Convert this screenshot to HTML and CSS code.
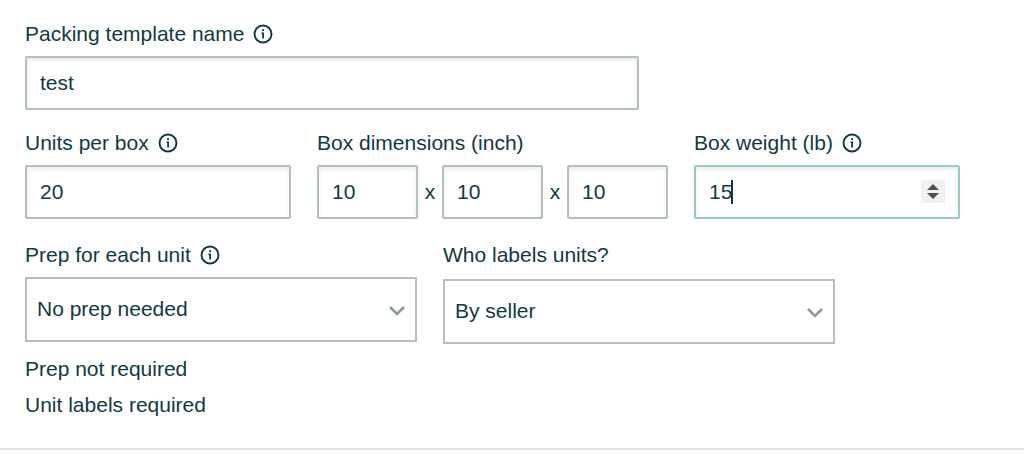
FILE: index.html
```
<!DOCTYPE html>
<html lang="en">
<head>
    <meta charset="UTF-8">
    <meta name="viewport" content="width=device-width, initial-scale=1.0">
    <title>Packing template</title>
    <link rel="stylesheet" href="styles.css">
</head>
<body>
    <svg class="sprite" aria-hidden="true">
        <symbol id="icon-info" viewBox="0 0 20 20">
            <circle cx="10" cy="10" r="8.5" fill="none" stroke="currentColor" stroke-width="1.9"/>
            <rect x="9.1" y="5.2" width="1.9" height="1.9" fill="currentColor"/>
            <path d="M8.3 8.5H11v6H9.2V9.7h-.9z" fill="currentColor"/>
        </symbol>
        <symbol id="icon-chevron" viewBox="0 0 18 12">
            <path d="M2 2l7 7 7-7" fill="none" stroke="currentColor" stroke-width="2.6"/>
        </symbol>
    </svg>

    <form class="packing-form">
        <div class="form-group name-group">
            <div class="label-row">
                <label for="templateName">Packing template name</label>
                <svg class="info-icon"><use href="#icon-info"/></svg>
            </div>
            <input type="text" id="templateName" value="test">
        </div>

        <div class="box-row">
            <div class="form-group">
                <div class="label-row">
                    <label for="unitsPerBox">Units per box</label>
                    <svg class="info-icon"><use href="#icon-info"/></svg>
                </div>
                <input type="number" id="unitsPerBox" value="20">
            </div>

            <div class="form-group">
                <div class="label-row">
                    <label for="boxLength">Box dimensions (inch)</label>
                </div>
                <div class="dimensions">
                    <input type="number" id="boxLength" value="10">
                    <span class="times">x</span>
                    <input type="number" id="boxWidth" value="10" aria-label="Box width">
                    <span class="times">x</span>
                    <input type="number" id="boxHeight" value="10" aria-label="Box height">
                </div>
            </div>

            <div class="form-group">
                <div class="label-row">
                    <label for="boxWeight">Box weight (lb)</label>
                    <svg class="info-icon"><use href="#icon-info"/></svg>
                </div>
                <div class="weight-field">
                    <input type="number" id="boxWeight" value="15" autofocus>
                    <span class="caret"></span>
                </div>
            </div>
        </div>

        <div class="prep-row">
            <div class="form-group">
                <div class="label-row">
                    <label for="prep">Prep for each unit</label>
                    <svg class="info-icon"><use href="#icon-info"/></svg>
                </div>
                <div class="select-wrap">
                    <select id="prep">
                        <option>No prep needed</option>
                    </select>
                    <svg class="chevron"><use href="#icon-chevron"/></svg>
                </div>
            </div>

            <div class="form-group labels-group">
                <div class="label-row">
                    <label for="labeling">Who labels units?</label>
                </div>
                <div class="select-wrap">
                    <select id="labeling">
                        <option>By seller</option>
                    </select>
                    <svg class="chevron"><use href="#icon-chevron"/></svg>
                </div>
            </div>
        </div>

        <div class="summary">
            <p>Prep not required</p>
            <p>Unit labels required</p>
        </div>
    </form>
</body>
</html>
```
FILE: styles.css
```
* {
    margin: 0;
    padding: 0;
    box-sizing: border-box;
}
body {
    background: white;
    color: #0f3a42;
    font-family: "Liberation Sans", Arial, sans-serif;
    font-size: 21px;
    line-height: 24px;
}
.sprite {
    display: none;
}
.packing-form {
    padding: 22px 25px 25px;
    border-bottom: 2px solid #dfe4e4;
}
.form-group {
    display: flex;
    flex-direction: column;
    gap: 10px;
    min-width: 0;
}
.name-group {
    max-width: 614px;
    margin-bottom: 21px;
}
.box-row {
    display: grid;
    grid-template-columns: 266fr 351fr 266fr;
    gap: 26px;
    max-width: 935px;
    margin-bottom: 24px;
}
.prep-row {
    display: grid;
    grid-template-columns: 1fr 1fr;
    gap: 26px;
    align-items: start;
    max-width: 810px;
    margin-bottom: 7px;
}
.labels-group {
    gap: 12px;
}
.label-row {
    display: flex;
    align-items: center;
    gap: 9px;
    white-space: nowrap;
}
.info-icon {
    width: 20px;
    height: 20px;
}
input {
    width: 100%;
    min-width: 0;
    height: 54px;
    padding: 0 13px;
    border: 2px solid #b3c0c2;
    border-radius: 2px;
    background: white;
    box-shadow: inset 0 2px 4px rgba(0, 40, 50, 0.1);
    color: inherit;
    font: inherit;
    outline: none;
}
input:focus {
    border-color: #94c9c4;
    caret-color: transparent;
}
.dimensions {
    display: flex;
    align-items: center;
}
.dimensions input {
    flex: 1;
}
.times {
    width: 24px;
    text-align: center;
}
.weight-field {
    position: relative;
}
.caret {
    position: absolute;
    top: 15px;
    left: 37px;
    width: 2px;
    height: 24px;
    background: #0f3a42;
}
input[type="number"] {
    appearance: textfield;
}
#boxWeight {
    appearance: auto;
}
#boxWeight::-webkit-inner-spin-button {
    appearance: none;
    width: 24px;
    height: 23px;
    opacity: 1;
    background: #f0f1f1 url("data:image/svg+xml,%3Csvg xmlns='http://www.w3.org/2000/svg' viewBox='0 0 24 23'%3E%3Cpath d='M6 10l6-6 6 6zM6 13h12l-6 6z' fill='%23505050'/%3E%3C/svg%3E") center no-repeat;
}
.select-wrap {
    position: relative;
}
select {
    display: block;
    width: 100%;
    height: 65px;
    padding: 0 40px 2px 10px;
    border: 2px solid #b3c0c2;
    border-radius: 0;
    appearance: none;
    background: white;
    color: inherit;
    font: inherit;
    outline: none;
}
.chevron {
    position: absolute;
    top: 28px;
    right: 11px;
    width: 18px;
    height: 12px;
    color: #8a9b9e;
    pointer-events: none;
}
.summary {
    line-height: 36px;
}
```
